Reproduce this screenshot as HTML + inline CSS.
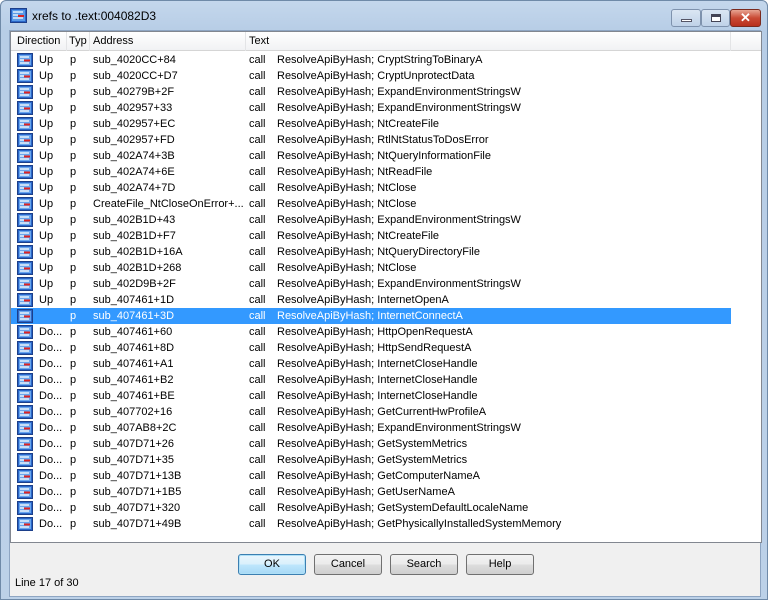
<!DOCTYPE html>
<html><head><meta charset="utf-8"><style>
*{margin:0;padding:0;box-sizing:border-box}
body{width:768px;height:600px;overflow:hidden;font-family:"Liberation Sans",sans-serif;font-size:11px;color:#000;background:#fff}
.win{position:absolute;left:0;top:0;width:768px;height:600px;background:linear-gradient(#c4d7ec,#b7cde6 30px,#bcd1e8);border:1px solid #6f8aa8;border-radius:6px 6px 0 0}
.title{position:absolute;left:31px;top:8px;font-size:12px;color:#000}
.client{position:absolute;left:8px;top:29px;width:752px;height:567px;background:#f0f0f0;border:1px solid #8ea5c2}
.list{position:absolute;left:0;top:0;width:752px;height:512px;background:#fff;border:1px solid #828790}
.hdr{position:absolute;left:0;top:0;width:750px;height:19px;background:linear-gradient(#fff,#f1f2f4);border-bottom:1px solid #d5d5d5}
.hdr span{position:absolute;top:3px;font-size:11px}
.hsep{position:absolute;top:0;width:1px;height:19px;background:#e3e4e6}
.row{position:absolute;left:0;height:16px;width:720px;font-size:11px;line-height:16px}
.row span{position:absolute;white-space:nowrap}
.sel{background:#3399ff;color:#fff}
.ic{position:absolute;left:6px;top:1px}
.btn{position:absolute;top:523px;width:68px;height:21px;border:1px solid #707070;border-radius:3px;background:linear-gradient(#f2f2f2,#ebebeb 50%,#dddddd 51%,#cfcfcf);text-align:center;line-height:19px;font-size:11px}
.ok{border-color:#3c7fb1;background:linear-gradient(#eaf6fd,#d9f0fc 50%,#bee6fd 51%,#a7d9f5);box-shadow:inset 0 0 0 1px #aee0f7}
.cb{position:absolute;top:8px;height:18px;border:1px solid #7e92ad;border-radius:3px;background:linear-gradient(#dbe6f3,#bfd2e8)}
</style></head><body>
<div class="win">
<svg style="position:absolute;left:9px;top:7px" width="17" height="15" viewBox="0 0 17 15"><rect x="0.5" y="0.5" width="16" height="14" fill="#2a66c8" stroke="#1c3f8a"/><rect x="2" y="2" width="13" height="11" fill="#5a9be8"/><path d="M3 4h10M3 7h5M3 10h10" stroke="#fff" stroke-width="1.2"/><path d="M8 8h6" stroke="#d22" stroke-width="2"/></svg>
<div class="title">xrefs to .text:004082D3</div>
<div class="cb" style="left:670px;width:30px"><div style="position:absolute;left:9px;top:9px;width:11px;height:3px;background:#fff;border:1px solid #556"></div></div>
<div class="cb" style="left:700px;width:29px"><div style="position:absolute;left:9px;top:4px;width:10px;height:8px;border:1px solid #445;background:#fff;box-shadow:inset 0 2px 0 #445"></div></div>
<div class="cb" style="left:729px;width:31px;background:linear-gradient(#e8a593,#c94a34 50%,#b8301c);border-color:#7a2a1e;color:#fff;text-align:center;font-weight:bold;font-size:13px;line-height:16px">✕</div>
<div class="client">
<div class="list">
<div class="hdr"><span style="left:6px">Direction</span><span style="left:58px">Typ</span><span style="left:82px">Address</span><span style="left:238px">Text</span>
<div class="hsep" style="left:55px"></div><div class="hsep" style="left:78px"></div><div class="hsep" style="left:234px"></div><div class="hsep" style="left:719px"></div></div>
<div id="rows"></div>
</div>
<div class="btn ok" style="left:228px">OK</div>
<div class="btn" style="left:304px">Cancel</div>
<div class="btn" style="left:380px">Search</div>
<div class="btn" style="left:456px">Help</div>
<div style="position:absolute;left:5px;top:546px;font-size:11px">Line 17 of 30</div>
</div></div>
<script>
var d=[["Up","sub_4020CC+84","CryptStringToBinaryA"],["Up","sub_4020CC+D7","CryptUnprotectData"],["Up","sub_40279B+2F","ExpandEnvironmentStringsW"],["Up","sub_402957+33","ExpandEnvironmentStringsW"],["Up","sub_402957+EC","NtCreateFile"],["Up","sub_402957+FD","RtlNtStatusToDosError"],["Up","sub_402A74+3B","NtQueryInformationFile"],["Up","sub_402A74+6E","NtReadFile"],["Up","sub_402A74+7D","NtClose"],["Up","CreateFile_NtCloseOnError+...","NtClose"],["Up","sub_402B1D+43","ExpandEnvironmentStringsW"],["Up","sub_402B1D+F7","NtCreateFile"],["Up","sub_402B1D+16A","NtQueryDirectoryFile"],["Up","sub_402B1D+268","NtClose"],["Up","sub_402D9B+2F","ExpandEnvironmentStringsW"],["Up","sub_407461+1D","InternetOpenA"],["","sub_407461+3D","InternetConnectA"],["Do...","sub_407461+60","HttpOpenRequestA"],["Do...","sub_407461+8D","HttpSendRequestA"],["Do...","sub_407461+A1","InternetCloseHandle"],["Do...","sub_407461+B2","InternetCloseHandle"],["Do...","sub_407461+BE","InternetCloseHandle"],["Do...","sub_407702+16","GetCurrentHwProfileA"],["Do...","sub_407AB8+2C","ExpandEnvironmentStringsW"],["Do...","sub_407D71+26","GetSystemMetrics"],["Do...","sub_407D71+35","GetSystemMetrics"],["Do...","sub_407D71+13B","GetComputerNameA"],["Do...","sub_407D71+1B5","GetUserNameA"],["Do...","sub_407D71+320","GetSystemDefaultLocaleName"],["Do...","sub_407D71+49B","GetPhysicallyInstalledSystemMemory"]];
var ic='<svg class="ic" width="16" height="14" viewBox="0 0 16 14"><rect x="0.5" y="0.5" width="15" height="13" fill="#2a66c8" stroke="#1c3f8a"/><rect x="2" y="2" width="12" height="10" fill="#6aa6ee"/><path d="M3 4h9M3 7h4M3 10h9" stroke="#fff" stroke-width="1.2"/><path d="M7 7.5h6" stroke="#d22" stroke-width="2"/></svg>';
var h='';d.forEach(function(r,i){h+='<div class="row'+(i==16?' sel':'')+'" style="top:'+(20+i*16)+'px">'+ic+'<span style="left:28px">'+r[0]+'</span><span style="left:59px">p</span><span style="left:82px">'+r[1]+'</span><span style="left:238px">call</span><span style="left:266px">ResolveApiByHash; '+r[2]+'</span></div>'});
document.getElementById('rows').innerHTML=h;
</script>
</body></html>
